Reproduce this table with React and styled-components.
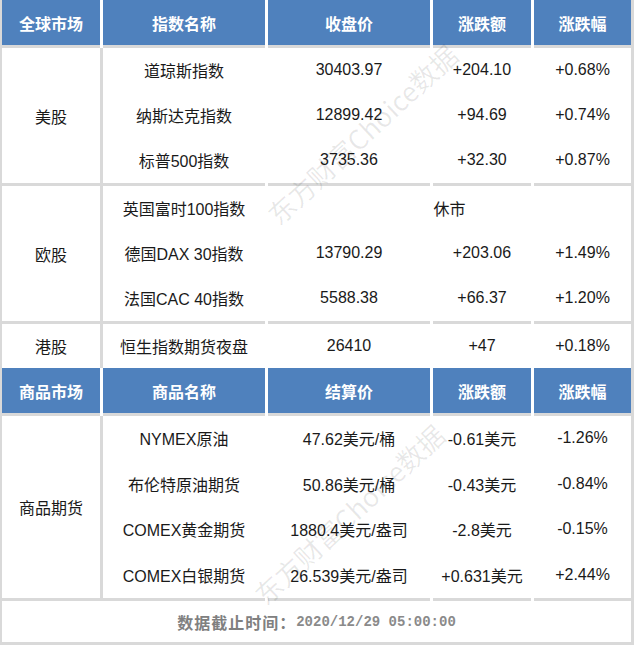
import styled, { createGlobalStyle } from 'styled-components';

const GlobalStyle = createGlobalStyle`
  body {
    margin: 0;
    background: #ffffff;
  }
`;

const line = '#d9d9d9';

const indexHead = ['全球市场', '指数名称', '收盘价', '涨跌额', '涨跌幅'];
const goodsHead = ['商品市场', '商品名称', '结算价', '涨跌额', '涨跌幅'];

const indexGroups = [
    {
        market: '美股',
        rows: [
            ['道琼斯指数', '30403.97', '+204.10', '+0.68%'],
            ['纳斯达克指数', '12899.42', '+94.69', '+0.74%'],
            ['标普500指数', '3735.36', '+32.30', '+0.87%'],
        ],
    },
    {
        market: '欧股',
        rows: [
            ['英国富时100指数', '休市'],
            ['德国DAX 30指数', '13790.29', '+203.06', '+1.49%'],
            ['法国CAC 40指数', '5588.38', '+66.37', '+1.20%'],
        ],
    },
    {
        market: '港股',
        noLine: true,
        heights: [44],
        rows: [
            ['恒生指数期货夜盘', '26410', '+47', '+0.18%'],
        ],
    },
];

const goodsGroups = [
    {
        market: '商品期货',
        heights: [45, 46, 45, 46],
        rows: [
            ['NYMEX原油', '47.62美元/桶', '-0.61美元', '-1.26%'],
            ['布伦特原油期货', '50.86美元/桶', '-0.43美元', '-0.84%'],
            ['COMEX黄金期货', '1880.4美元/盎司', '-2.8美元', '-0.15%'],
            ['COMEX白银期货', '26.539美元/盎司', '+0.631美元', '+2.44%'],
        ],
    },
];

function Header({ titles }) {
    return titles.map(t => <HeadCell key={t}>{t}</HeadCell>);
}

function Group({ group }) {
    const last = group.rows.length - 1;
    return (
        <>
            <Market $span={group.rows.length} $noLine={group.noLine}>{group.market}</Market>
            {group.rows.map((row, i) => {
                const h = group.heights ? group.heights[i] : 45;
                const bottom = i === last && !group.noLine;
                return row.map((val, j) => (
                    <Cell
                        key={i + '-' + j}
                        $h={h}
                        $bottom={bottom}
                        $wide={row.length === 2 && j === 1}
                    >
                        {val}
                    </Cell>
                ));
            })}
        </>
    );
}

export default function App() {
    return (
        <>
            <GlobalStyle />
            <Table>
                <Header titles={indexHead} />
                {indexGroups.map(g => <Group key={g.market} group={g} />)}
                <Header titles={goodsHead} />
                {goodsGroups.map(g => <Group key={g.market} group={g} />)}
                <Footer>
                    <FooterLabel>数据截止时间：</FooterLabel>
                    <FooterTime>2020/12/29 05:00:00</FooterTime>
                </Footer>
                <Watermark style={{ left: 360, top: 134 }}>东方财富Choice数据</Watermark>
                <Watermark style={{ left: 347, top: 514 }}>东方财富Choice数据</Watermark>
            </Table>
        </>
    );
}

const Table = styled.div`
    position: relative;
    overflow: hidden;
    box-sizing: border-box;
    width: 634px;
    border-left: 2px solid ${line};
    border-right: 3px solid ${line};
    background: #ffffff;
    display: grid;
    grid-template-columns: 98px 162px 162px 98px 97px;
    column-gap: 3px;
    font-family: "Liberation Sans", "Noto Sans CJK SC", sans-serif;
    font-size: 16px;
    color: #1a1a1a;
`;

const HeadCell = styled.div`
    box-sizing: border-box;
    height: 48px;
    background: #4f81bd;
    border-bottom: 3px solid ${line};
    color: #ffffff;
    font-family: "Noto Sans CJK SC", sans-serif;
    font-weight: bold;
    font-size: 16px;
    display: flex;
    align-items: center;
    justify-content: center;
`;

const Market = styled.div`
    grid-row: span ${p => p.$span};
    box-sizing: border-box;
    border-bottom: ${p => (p.$noLine ? 'none' : `3px solid ${line}`)};
    box-shadow: 3px 0 0 ${line};
    display: flex;
    align-items: center;
    justify-content: center;
`;

const Cell = styled.div`
    grid-column: ${p => (p.$wide ? 'span 3' : 'auto')};
    box-sizing: border-box;
    height: ${p => p.$h + (p.$bottom ? 3 : 0)}px;
    border-bottom: ${p => (p.$bottom ? `3px solid ${line}` : 'none')};
    padding-bottom: 1px;
    display: flex;
    align-items: center;
    justify-content: center;
    white-space: nowrap;
`;

const Footer = styled.div`
    grid-column: 1 / -1;
    box-sizing: border-box;
    height: 44px;
    border-bottom: 3px solid ${line};
    display: flex;
    align-items: center;
    justify-content: center;
    color: #808080;
`;

const FooterLabel = styled.span`
    font-family: "Noto Sans CJK SC", sans-serif;
    font-weight: bold;
    font-size: 16px;
    letter-spacing: 1px;
`;

const FooterTime = styled.span`
    font-family: "Liberation Mono", monospace;
    font-weight: bold;
    font-size: 14px;
    color: #8a8a8a;
`;

const Watermark = styled.div`
    position: absolute;
    transform: translate(-50%, -50%) rotate(-43deg);
    font-family: "Noto Sans CJK SC", sans-serif;
    font-size: 27px;
    color: rgba(0, 0, 0, 0.09);
    white-space: nowrap;
    pointer-events: none;
`;
